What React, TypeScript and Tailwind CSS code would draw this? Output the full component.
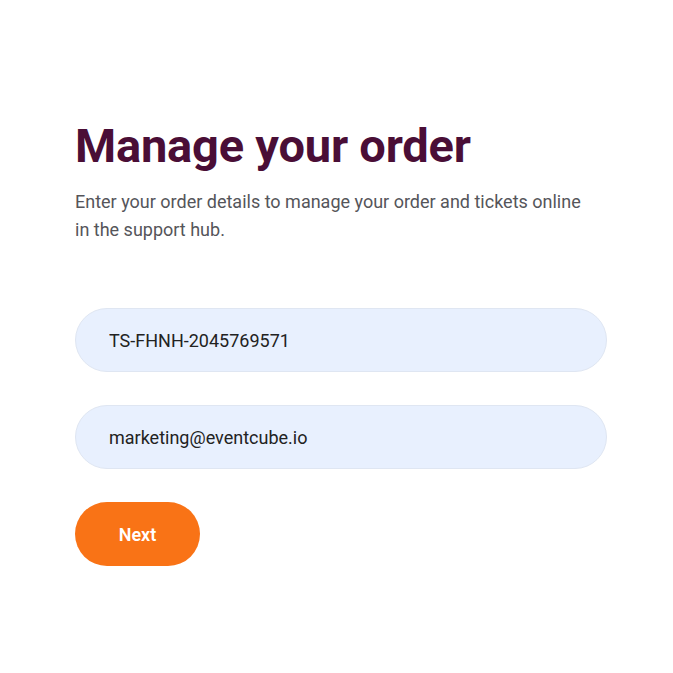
export default function App() {
  return (
    <div
      className="min-h-screen bg-white pl-[75px] pt-[117px]"
      style={{ fontFamily: 'Roboto, "Liberation Sans", sans-serif' }}
    >
      <div className="w-[532px]">
        <h1 className="text-[47px] leading-[58px] font-bold tracking-[-0.2px] text-[#4a0e36]">
          Manage your order
        </h1>
        <p className="mt-[13px] w-[518px] text-[18px] leading-[28px] text-[#55555a]">
          Enter your order details to manage your order and tickets online in the support hub.
        </p>

        <form className="mt-[64px] flex flex-col gap-[33px]" onSubmit={(e) => e.preventDefault()}>
          <input
            defaultValue="TS-FHNH-2045769571"
            className="h-[64px] w-full rounded-full border border-[#dfe6f2] bg-[#e8f0fe] px-[33px] text-[18px] text-[#222] outline-none"
          />
          <input
            defaultValue="marketing@eventcube.io"
            className="h-[64px] w-full rounded-full border border-[#dfe6f2] bg-[#e8f0fe] px-[33px] text-[18px] text-[#222] outline-none"
          />
          <button
            type="submit"
            className="h-[64px] w-[125px] rounded-full bg-[#f97316] text-[18px] font-semibold text-white"
          >
            Next
          </button>
        </form>
      </div>
    </div>
  );
}
